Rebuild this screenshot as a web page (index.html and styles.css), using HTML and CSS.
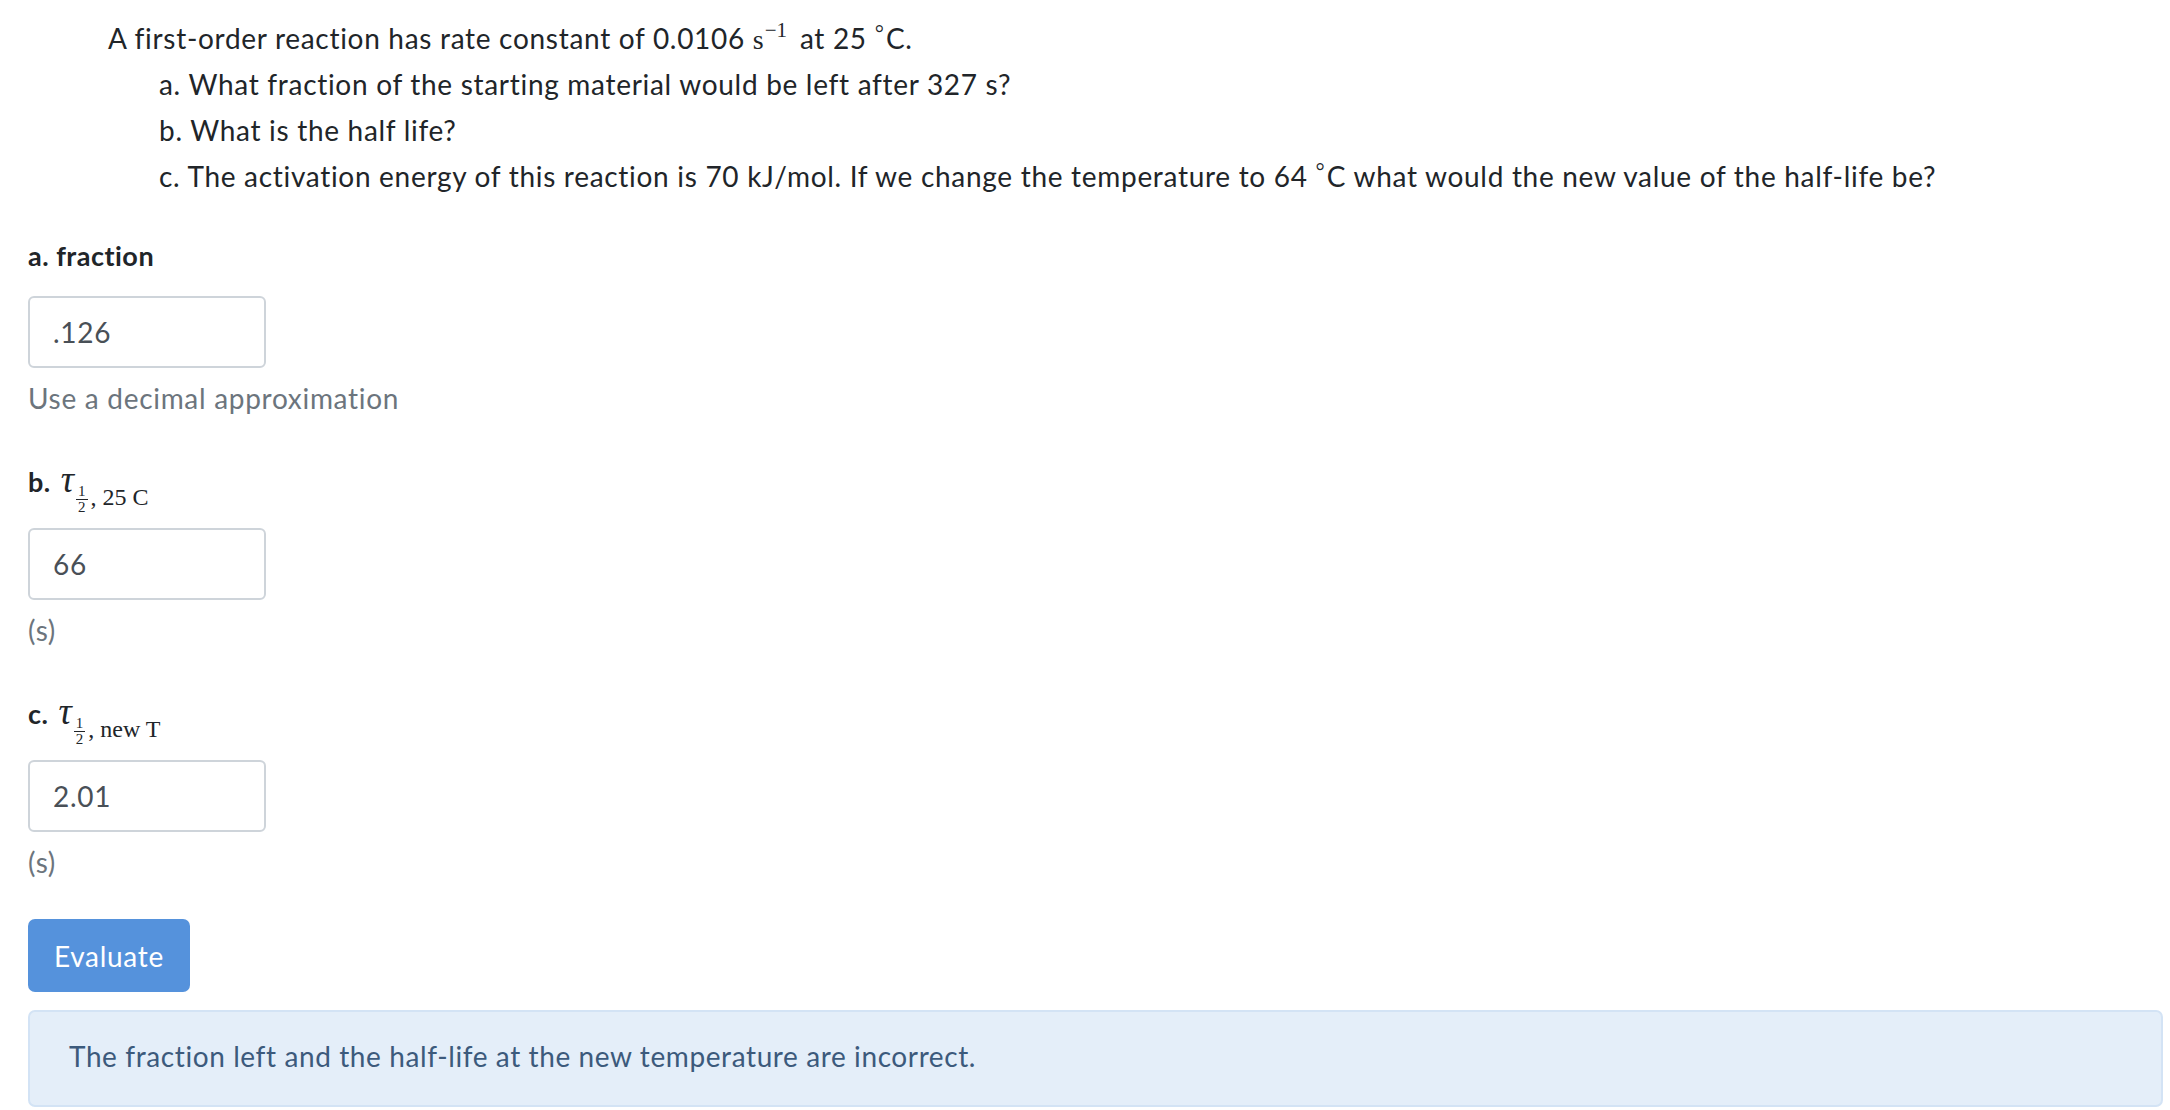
FILE: index.html
```html
<!DOCTYPE html>
<html lang="en">
<head>
<meta charset="utf-8">
<title>First-order reaction</title>
<link rel="stylesheet" href="styles.css">
</head>
<body>
<div class="problem">
  <p class="intro">A first-order reaction has rate constant of 0.0106 <span class="m-s">s</span><sup class="m-sup">−1</sup> at 25 <sup class="deg">°</sup>C.</p>
  <ol class="parts">
    <li>a. What fraction of the starting material would be left after 327 s?</li>
    <li>b. What is the half life?</li>
    <li>c. The activation energy of this reaction is 70 kJ/mol. If we change the temperature to 64 <sup class="deg">°</sup>C what would the new value of the half-life be?</li>
  </ol>
</div>
<form class="answers">
  <div class="field">
    <label class="field-label">a. fraction</label>
    <input class="input" type="text" value=".126">
    <div class="hint">Use a decimal approximation</div>
  </div>
  <div class="field">
    <label class="field-label math">b. <span class="tau">τ</span><span class="sub"><span class="frac"><span class="num">1</span><span class="den">2</span></span>, 25 C</span></label>
    <input class="input" type="text" value="66">
    <div class="hint">(s)</div>
  </div>
  <div class="field field-last">
    <label class="field-label math">c. <span class="tau">τ</span><span class="sub"><span class="frac"><span class="num">1</span><span class="den">2</span></span>, new T</span></label>
    <input class="input" type="text" value="2.01">
    <div class="hint">(s)</div>
  </div>
  <button class="btn" type="button">Evaluate</button>
  <div class="alert">The fraction left and the half-life at the new temperature are incorrect.</div>
</form>
</body>
</html>
```
FILE: styles.css
```css
body {
  margin: 0;
  font-family: "Lato", "Noto Sans", sans-serif;
  letter-spacing: 0.7px;
  color: #212529;
  background: #fff;
}

.problem {
  padding: 15px 0 0 108px;
  font-size: 28px;
  line-height: 46px;
}

.intro {
  margin: 0;
}

.m-s {
  font-family: "Liberation Serif", serif;
  font-size: 28px;
  line-height: 1;
  letter-spacing: 0;
}

.m-sup {
  font-family: "Liberation Serif", serif;
  font-size: 21px;
  line-height: 0;
  vertical-align: 12px;
  margin-left: 1px;
  margin-right: 5px;
  letter-spacing: 0;
}

.deg {
  font-family: "Liberation Serif", serif;
  font-size: 23px;
  line-height: 0;
  vertical-align: 8px;
  margin-right: 2px;
  letter-spacing: 0;
}

.parts {
  list-style: none;
  margin: 0;
  padding: 0 0 0 51px;
}

.answers {
  padding: 41px 7px 0 28px;
  display: flex;
  flex-direction: column;
  align-items: flex-start;
}

.field {
  margin-bottom: 43px;
  width: 100%;
}

.field-last {
  margin-bottom: 37px;
}

.field-label {
  display: block;
  font-weight: 700;
  font-size: 27px;
  letter-spacing: 0.5px;
  line-height: 32px;
  height: 32px;
  margin-bottom: 24px;
  white-space: nowrap;
}

.field-label.math {
  height: 43px;
}

.tau {
  font-family: "Liberation Serif", serif;
  font-style: italic;
  font-weight: 400;
  font-size: 37px;
  line-height: 1;
  letter-spacing: 0;
  margin-left: 3px;
}

.sub {
  display: inline-block;
  font-family: "Liberation Serif", serif;
  font-weight: 400;
  font-size: 24px;
  letter-spacing: 0;
  line-height: 1;
  vertical-align: -13px;
  margin-left: 2px;
}

.frac {
  display: inline-flex;
  flex-direction: column;
  align-items: center;
  vertical-align: middle;
  font-size: 15px;
  line-height: 15px;
  margin-right: 3px;
}

.frac .num {
  border-bottom: 1.5px solid #212529;
  padding: 0 2px;
}

.input {
  display: block;
  box-sizing: border-box;
  width: 238px;
  height: 72px;
  border: 2px solid #ced4da;
  border-radius: 6px;
  padding: 0 23px;
  font-family: "Lato", "Noto Sans", sans-serif;
  font-size: 28px;
  letter-spacing: 0.7px;
  color: #495057;
  background: #fff;
  outline: none;
}

.hint {
  margin-top: 10px;
  font-size: 28px;
  line-height: 40px;
  color: #6c757d;
}

.btn {
  height: 73px;
  padding: 0 26px;
  font-family: "Lato", "Noto Sans", sans-serif;
  font-size: 28px;
  letter-spacing: 0.7px;
  color: #fff;
  background: #5592dc;
  border: none;
  border-radius: 7px;
  cursor: pointer;
}

.alert {
  margin-top: 18px;
  box-sizing: border-box;
  width: 100%;
  height: 97px;
  display: flex;
  align-items: center;
  padding: 0 39px 5px;
  background: #e4eef9;
  border: 2px solid #d3e3f5;
  border-radius: 7px;
  color: #3c5a7c;
  font-size: 28px;
  letter-spacing: 0.6px;
}
```
